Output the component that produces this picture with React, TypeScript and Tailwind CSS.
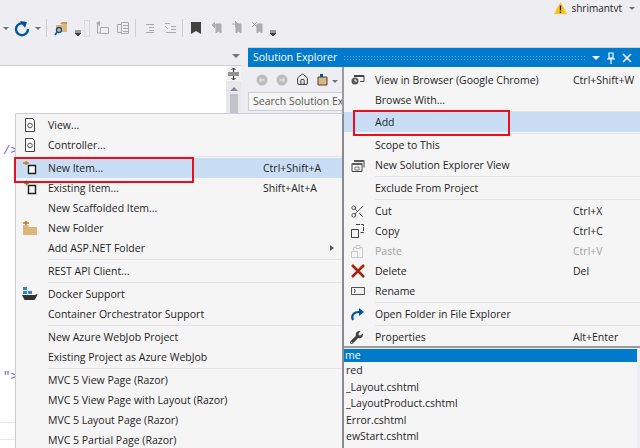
import { ReactNode } from "react";
import { Scissors, House } from "lucide-react";
import { FaWrench } from "react-icons/fa";

const font = { fontFamily: '"Open Sans", "Noto Sans", sans-serif' };

const ToolbarStrip = () => (
  <svg width="290" height="47" viewBox="0 0 290 47" className="block">
    <path d="M3 27h6l-3 3z" fill="#717171" />
    <path d="M28 29a6 6 0 1 1-3-5" fill="none" stroke="#00539c" strokeWidth="2.400" />
    <path d="M20 21l7 1-2 6z" fill="#00539c" />
    <path d="M35 27h6l-3 3z" fill="#717171" />
    <path d="M46.500 19v18" stroke="#ccced6" />
    <path d="M56 25h5l2-1h4v8h-11z" fill="#dcb67a" />
    <path d="M60 24l2-2h5v2z" fill="#c59a55" />
    <circle cx="59" cy="30" r="2.500" fill="none" stroke="#00539c" strokeWidth="1.300" />
    <path d="M57 32l-2 3" stroke="#00539c" strokeWidth="1.500" />
    <path d="M75 31h6M75 33h6l-3 3z" stroke="#424242" fill="#424242" />
    <path d="M84.500 20.500h5v16h-5z" fill="none" stroke="#c8c8cc" strokeDasharray="1 1" />
    <path d="M97.500 23v10h3M100.500 27.500h8v6h-8z" fill="none" stroke="#a9a9ad" />
    <path d="M96 23l4 3v-5z" fill="#a9a9ad" />
    <path d="M117.500 24.500h4v8h-4zM121.500 22.500h7v11h-7zM123 25.500h5M123 28.500h5M123 31.500h5" fill="none" stroke="#a9a9ad" />
    <path d="M135.500 19v18" stroke="#ccced6" />
    <path d="M146 24.500h8M149 27.500h5M149 30.500h5M146 32.500h8" stroke="#a9a9ad" fill="none" />
    <path d="M165 23.500h5M165 26l3 3M171 26.500h5M171 29.500h5M166 32.500h10" stroke="#a9a9ad" fill="none" />
    <path d="M182.500 19v18" stroke="#ccced6" />
    <path d="M191 22h10v12l-5-3-5 3z" fill="#424242" />
    <path d="M216 24h5v9l-2.500-2-2.500 2zM218 25h-5M215 22l-3 3 3 3" fill="#b0b0b4" stroke="#a9a9ad" />
    <path d="M236 24h5v9l-2.500-2-2.500 2zM232 24h5M235 21l3 3-3 3" fill="#b0b0b4" stroke="#a9a9ad" />
    <path d="M257 24h5v9l-2.500-2-2.500 2zM252 22l5 5M257 22l-5 5" fill="#b0b0b4" stroke="#a9a9ad" />
    <path d="M270 31h6M270 33h6l-3 3z" stroke="#424242" fill="#424242" />
  </svg>
);

const PageIcon = () => (
  <svg width="16" height="16" viewBox="0 0 16 16">
    <path d="M3.500 1.500h7l2 2v11h-9z" fill="#fafafa" stroke="#424242" />
    <circle cx="8" cy="8.500" r="2.300" fill="none" stroke="#555" />
  </svg>
);
const NewItemIcon = ({ mark }: { mark: "star" | "plus" }) => (
  <svg width="16" height="16" viewBox="0 0 16 16">
    <path d="M6.500 5.500h7v8h-7z" fill="#f6f6f6" stroke="#212121" strokeWidth="1.400" />
    {mark === "star" ? (
      <path d="M1 3h6M4 1v4" stroke="#c27d1a" strokeWidth="1.500" />
    ) : (
      <path d="M2 3h5M4.500 .5v5" stroke="#388a34" strokeWidth="1.500" />
    )}
  </svg>
);
const FolderIcon = () => (
  <svg width="16" height="16" viewBox="0 0 16 16">
    <path d="M1 5h5l1 2h8v8h-14z" fill="#dcb67a" />
    <path d="M1 3h6M4 1v4" stroke="#c27d1a" strokeWidth="1.500" />
  </svg>
);
const DockerIcon = () => (
  <svg width="16" height="16" viewBox="0 0 16 16">
    <path d="M1 1h4v3h-4zM1 5h4v3h-4zM6 5h4v3h-4z" fill="#2f87c6" />
    <path d="M0 9h13l2-1 .5 1-3 5h-10z" fill="#333" />
  </svg>
);
const BrowserIcon = () => (
  <svg width="16" height="16" viewBox="0 0 16 16">
    <path d="M4 3.500h10v6h-4" fill="none" stroke="#424242" />
    <path d="M4 3h10v2h-10z" fill="#424242" />
    <circle cx="5" cy="9" r="3.500" fill="#5a5a5a" />
    <path d="M5 7v2h2" stroke="#fff" fill="none" />
  </svg>
);
const NewViewIcon = () => (
  <svg width="16" height="16" viewBox="0 0 16 16">
    <path d="M4 3.500h10v7M2 6.500h10v8h-10z" fill="none" stroke="#424242" />
    <path d="M2 6h10v2h-10zM4 3h10v2h-10z" fill="#5a5a5a" />
    <path d="M5 10h4v3h-4z" fill="none" stroke="#777" />
  </svg>
);
const CopyIcon = () => (
  <svg width="16" height="16" viewBox="0 0 16 16">
    <path d="M1.500 6.500h7v8h-7z" fill="none" stroke="#424242" />
    <path d="M6 1.500h7.500v8h-3" fill="none" stroke="#424242" strokeDasharray="4 1" />
  </svg>
);
const PasteIcon = () => (
  <svg width="16" height="16" viewBox="0 0 16 16">
    <path d="M3.500 4.500h9v10h-9z" fill="none" stroke="#c8c8c8" />
    <path d="M6 2.500h4v3h-4zM1.500 8.500h6v6h-6z" fill="#f5f5f5" stroke="#c8c8c8" />
  </svg>
);
const DeleteIcon = () => (
  <svg width="16" height="16" viewBox="0 0 16 16">
    <path d="M2 2l12 12M14 2l-12 12" stroke="#a1260d" strokeWidth="2.600" />
  </svg>
);
const RenameIcon = () => (
  <svg width="16" height="16" viewBox="0 0 16 16">
    <path d="M1.500 4.500h13v7h-13z" fill="#efefef" stroke="#555" />
    <path d="M4 6l1 1v2l-1 1" fill="none" stroke="#424242" />
  </svg>
);
const OpenFolderIcon = () => (
  <svg width="16" height="16" viewBox="0 0 16 16">
    <path d="M3 14c-2-4 0-8 6-8" fill="none" stroke="#00539c" strokeWidth="2.200" />
    <path d="M9 2l5 4-5 4z" fill="#00539c" />
  </svg>
);

type Row = { label?: string; keys?: string; icon?: ReactNode; active?: boolean; off?: boolean; sub?: boolean; sep?: boolean; thin?: boolean };

const leftRows: Row[] = [
  { label: "View...", icon: <PageIcon /> },
  { label: "Controller...", icon: <PageIcon /> },
  { sep: true },
  { label: "New Item...", keys: "Ctrl+Shift+A", icon: <NewItemIcon mark="star" />, active: true },
  { label: "Existing Item...", keys: "Shift+Alt+A", icon: <NewItemIcon mark="plus" /> },
  { label: "New Scaffolded Item..." },
  { label: "New Folder", icon: <FolderIcon /> },
  { label: "Add ASP.NET Folder", sub: true },
  { sep: true },
  { label: "REST API Client..." },
  { sep: true },
  { label: "Docker Support", icon: <DockerIcon /> },
  { label: "Container Orchestrator Support" },
  { sep: true },
  { label: "New Azure WebJob Project" },
  { label: "Existing Project as Azure WebJob" },
  { sep: true },
  { label: "MVC 5 View Page (Razor)" },
  { label: "MVC 5 View Page with Layout (Razor)" },
  { label: "MVC 5 Layout Page (Razor)" },
  { label: "MVC 5 Partial Page (Razor)" },
];

const rightRows: Row[] = [
  { label: "View in Browser (Google Chrome)", keys: "Ctrl+Shift+W", icon: <BrowserIcon /> },
  { label: "Browse With..." },
  { sep: true, thin: true },
  { label: "Add", active: true },
  { sep: true },
  { label: "Scope to This" },
  { label: "New Solution Explorer View", icon: <NewViewIcon /> },
  { sep: true },
  { label: "Exclude From Project" },
  { sep: true },
  { label: "Cut", keys: "Ctrl+X", icon: <Scissors size={15} strokeWidth={1.4} color="#424242" /> },
  { label: "Copy", keys: "Ctrl+C", icon: <CopyIcon /> },
  { label: "Paste", keys: "Ctrl+V", icon: <PasteIcon />, off: true },
  { label: "Delete", keys: "Del", icon: <DeleteIcon /> },
  { label: "Rename", icon: <RenameIcon /> },
  { sep: true },
  { label: "Open Folder in File Explorer", icon: <OpenFolderIcon /> },
  { sep: true },
  { label: "Properties", keys: "Alt+Enter", icon: <FaWrench size={13} color="#424242" /> },
];

const MenuRows = ({ rows, gutter, keysAt }: { rows: Row[]; gutter: string; keysAt: string }) => (
  <>
    {rows.map((r, i) =>
      r.sep ? (
        <div key={i} className={`${r.thin ? "h-[2px]" : "h-[3px]"} flex items-center`}>
          <div className={`${gutter} shrink-0`} />
          <div className="h-px flex-1 bg-[#e3e3e6]" />
        </div>
      ) : (
        <div
          key={i}
          className={`h-5 flex items-center text-[10.5px] ${r.active ? "bg-[#c9def5]" : ""} ${r.off ? "text-[#a2a4a5]" : "text-[#1e1e1e]"}`}
        >
          <div className={`${gutter} shrink-0 flex items-center pl-[6px]`}>{r.icon}</div>
          <span className={`${keysAt} shrink-0 whitespace-nowrap pt-[2px]`}>{r.label}</span>
          <span className="whitespace-nowrap pt-[2px]">{r.keys}</span>
          {r.sub && <div className="ml-auto mr-2 border-y-[3px] border-l-[4px] border-y-transparent border-l-[#555]" />}
        </div>
      )
    )}
  </>
);

const files = ["red", "_Layout.cshtml", "_LayoutProduct.cshtml", "Error.cshtml", "ewStart.cshtml"];

export default function App() {
  return (
    <div className="relative w-[640px] h-[448px] overflow-hidden bg-[#eeeef2]" style={font}>
      {/* top bar */}
      <div className="h-[47px] relative">
        <div className="flex items-center justify-end h-4 pr-[5px] text-[10px] text-[#1e1e1e]">
          <svg width="13" height="12" viewBox="0 0 13 12" className="mr-[4px]">
            <path d="M6.500 0l6.500 12h-13z" fill="#fcc419" />
            <path d="M5.800 3.500h1.400v5h-1.400zM5.800 9.500h1.400v1.500h-1.400z" fill="#222" />
          </svg>
          <span>shrimantvt</span>
          <div className="ml-[7px] border-x-[3px] border-t-[3px] border-x-transparent border-t-[#717171]" />
        </div>
        <div className="absolute left-0 top-0">
          <ToolbarStrip />
        </div>
      </div>

      <div className="flex h-[401px]">
        {/* editor */}
        <div className="w-[248px] shrink-0 flex flex-col">
          <div className="h-[18px] flex items-center justify-end pr-[1px] mr-[7px]">
            <div className="border-x-[4px] border-t-[4px] border-x-transparent border-t-[#717171]" />
          </div>
          <div className="flex flex-1 border-t border-[#ccced6] mr-[7px]">
            <div className="flex-1 bg-white" />
            <div className="w-[15px] bg-[#e8e8ec] flex flex-col items-center">
              <div className="w-full h-[15px] bg-[#f5f5f5] flex items-center justify-center">
                <svg width="11" height="12" viewBox="0 0 11 12">
                  <path d="M0 5h11M0 7h11M5.500 0v4M5.500 8v4M3.500 2l2-2 2 2M3.500 10l2 2 2-2" stroke="#333" fill="none" />
                </svg>
              </div>
              <div className="mt-[6px] border-x-[4px] border-b-[4px] border-x-transparent border-b-[#868999]" />
              <div className="mt-[3px] w-[8px] h-[60px] bg-[#c2c3c9]" />
            </div>
          </div>
        </div>

        {/* solution explorer */}
        <div className="flex-1 flex flex-col border-t border-[#ccced6]">
          <div className="h-[19px] bg-[#007acc] flex items-center text-white text-[10.5px] pl-[5px] pr-[8px]">
            <span>Solution Explorer</span>
            <div className="flex-1 h-[5px] mx-[6px] bg-[radial-gradient(#5aa9e0_1px,transparent_1px)] bg-[length:3px_3px]" />
            <div className="border-x-[4px] border-t-[4px] border-x-transparent border-t-white" />
            <svg width="10" height="12" viewBox="0 0 10 12" className="ml-[6px]">
              <path d="M3 1h4v5h-4zM1 7h8M5 7v5" stroke="#fff" strokeWidth="1.200" fill="none" />
            </svg>
            <svg width="10" height="10" viewBox="0 0 10 10" className="ml-[6px]">
              <path d="M1 1l8 8M9 1l-8 8" stroke="#fff" strokeWidth="1.500" />
            </svg>
          </div>
          <div className="h-[25px] flex items-center pl-[8px] gap-[8px]">
            <svg width="12" height="12" viewBox="0 0 12 12">
              <circle cx="6" cy="6" r="5.500" fill="#bcbcbc" />
              <path d="M8.500 6h-5M5.500 4l-2 2 2 2" stroke="#f0f0f0" fill="none" />
            </svg>
            <svg width="12" height="12" viewBox="0 0 12 12">
              <circle cx="6" cy="6" r="5.500" fill="#bcbcbc" />
              <path d="M3.500 6h5M6.500 4l2 2-2 2" stroke="#f0f0f0" fill="none" />
            </svg>
            <House size={13} strokeWidth={1.8} color="#333" />
            <svg width="22" height="12" viewBox="0 0 22 12">
              <path d="M1 3h9v8h-9z" fill="#dcb67a" stroke="#424242" />
              <path d="M3 0h3v3h-3z" fill="#00539c" />
              <path d="M15 6h6l-3 3z" fill="#717171" />
            </svg>
          </div>
          <div className="h-[19px] w-[95px] bg-[#f5f5f5] border border-[#ccced6] flex items-center pl-[4px] text-[10.5px] text-[#555] whitespace-nowrap">
            Search Solution Ex
          </div>
          <div className="flex-1" />
          {/* file tree peeking out below the context menus */}
          <div className="ml-[96px] h-[99px] mr-[3px] bg-[#f5f5f5] text-[10.5px] text-[#1e1e1e] overflow-hidden">
            <div className="h-[13px] bg-[#007acc] text-white leading-[13px] pl-px">me</div>
            {files.map((f) => (
              <div key={f} className="h-[16.500px] leading-[16.500px] pl-[2px] whitespace-nowrap">{f}</div>
            ))}
          </div>
        </div>
      </div>

      {/* editor text left visible next to the menu */}
      <span className="absolute left-[3px] top-[142px] text-[12px] text-[#6a5cf0] font-['Liberation_Mono']">/&gt;</span>
      <span className="absolute left-[3px] top-[368px] text-[12px] text-[#6a5cf0] font-['Liberation_Mono']">"&gt;</span>
      <div className="absolute left-0 top-[422px] w-[15px] h-px bg-[#e6e6e6]" />
      <div className="absolute left-0 top-[439px] w-[15px] h-px bg-[#e6e6e6]" />

      {/* project context menu */}
      <div className="absolute left-[342px] top-[67px] w-[298px] h-[281px] bg-[#f5f5f5] border-l-2 border-b-2 border-[#9a9aa0] pt-[3px]">
        <MenuRows rows={rightRows} gutter="w-[31px]" keysAt="w-[198px]" />
      </div>
      <div className="absolute left-[353px] top-[110px] w-[157px] h-[26px] border-2 border-[#e8101c]" />

      {/* add submenu */}
      <div className="absolute left-[15px] top-[113px] w-[329px] h-[335px] bg-[#f5f5f5] border-l border-t border-[#ccced6] border-r-2 border-r-[#8a8a90] pt-[1px]">
        <MenuRows rows={leftRows} gutter="w-[32px]" keysAt="w-[215px]" />
      </div>
      <div className="absolute left-[14px] top-[157px] w-[180px] h-[26px] border-2 border-[#e8101c]" />
    </div>
  );
}
